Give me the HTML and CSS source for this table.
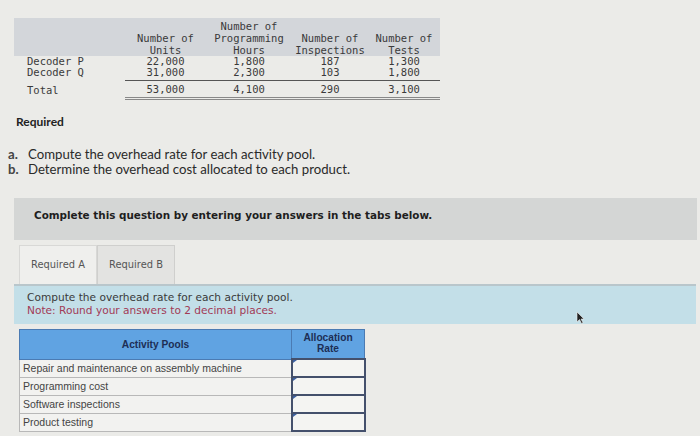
FILE: index.html
```html
<!DOCTYPE html>
<html>
<head>
<meta charset="utf-8">
<link rel="stylesheet" href="styles.css">
</head>
<body>
<div class="page">
  <table class="data">
    <thead>
      <tr>
        <th class="lbl"></th>
        <th class="c1">Number of<br>Units</th>
        <th class="c2">Number of<br>Programming<br>Hours</th>
        <th class="c3">Number of<br>Inspections</th>
        <th class="c4">Number of<br>Tests</th>
      </tr>
    </thead>
    <tbody>
      <tr class="first"><td class="lbl">Decoder P</td><td>22,000</td><td>1,800</td><td>187</td><td>1,300</td></tr>
      <tr class="sub"><td class="lbl">Decoder Q</td><td>31,000</td><td>2,300</td><td>103</td><td>1,800</td></tr>
      <tr class="total"><td class="lbl">Total</td><td>53,000</td><td>4,100</td><td>290</td><td>3,100</td></tr>
    </tbody>
  </table>

  <div class="required">Required</div>
  <ol class="tasks">
    <li><span class="mark">a.</span>Compute the overhead rate for each activity pool.</li>
    <li><span class="mark">b.</span>Determine the overhead cost allocated to each product.</li>
  </ol>

  <div class="complete">Complete this question by entering your answers in the tabs below.</div>

  <div class="tabs">
    <div class="tab active">Required A</div>
    <div class="tab">Required B</div>
  </div>
  <div class="instr">
    <div>Compute the overhead rate for each activity pool.</div>
    <div class="note">Note: Round your answers to 2 decimal places.</div>
    <svg class="cursor" width="9" height="13" viewBox="0 0 9 13"><path d="M1 1 L1 11 L3.5 8.5 L5.5 12.5 L7 11.8 L5 8 L8 8 Z" fill="#222" stroke="#eee" stroke-width="0.6"/></svg>
  </div>

  <table class="answer">
    <thead>
      <tr><th class="pool">Activity Pools</th><th class="rate">Allocation<br>Rate</th></tr>
    </thead>
    <tbody>
      <tr><td class="pool">Repair and maintenance on assembly machine</td><td class="rate"><span class="flag"></span></td></tr>
      <tr><td class="pool">Programming cost</td><td class="rate"><span class="flag"></span></td></tr>
      <tr><td class="pool">Software inspections</td><td class="rate"><span class="flag"></span></td></tr>
      <tr><td class="pool">Product testing</td><td class="rate"><span class="flag"></span></td></tr>
    </tbody>
  </table>
</div>
</body>
</html>
```
FILE: styles.css
```css
html, body {
  margin: 0;
  padding: 0;
  background: #ebebe8;
  width: 700px;
  height: 436px;
  overflow: hidden;
}
.page {
  padding: 18px 0 0 0;
  font-family: "Open Sans", "Liberation Sans", sans-serif;
  color: #2c2c2c;
}
.data {
  margin-left: 14px;
  width: 426px;
  border-collapse: collapse;
  font-family: "DejaVu Sans Mono", monospace;
  font-size: 10.5px;
  color: #3a3a3a;
}
.data thead th {
  background: #d3d6da;
  font-weight: normal;
  text-align: center;
  vertical-align: bottom;
  padding: 2px 0 0 0;
  line-height: 12px;
}
.data th.lbl { width: 111px; }
.data th.c1 { width: 81px; }
.data th.c2 { width: 86px; }
.data th.c3 { width: 76px; }
.data td {
  text-align: center;
  padding: 0;
  line-height: 11px;
}
.data td.lbl {
  text-align: left;
  padding-left: 13px;
}
.data tr.first td { padding-top: 0; }
.data tr.sub td:not(.lbl) { border-bottom: 1px solid #555; }
.data tr.sub td { padding-bottom: 2px; }
.data tr.total td { padding: 3px 0 2px 0; }
.data tr.total td.lbl { padding-left: 13px; }
.data tr.total td:not(.lbl) { border-bottom: 3px double #888; }

.required {
  margin: 14px 0 0 16px;
  font-family: "Lato", sans-serif;
  font-weight: bold;
  font-size: 12px;
  color: #222;
}
.tasks {
  list-style: none;
  margin: 18px 0 0 0;
  padding: 0 0 0 8px;
  font-family: "Lato", sans-serif;
  font-size: 13.2px;
  line-height: 15px;
  color: #2a2a2a;
}
.tasks .mark {
  display: inline-block;
  width: 20px;
  font-weight: bold;
  color: #444;
}
.complete {
  margin: 21px 3px 0 14px;
  height: 42px;
  box-sizing: border-box;
  padding: 11px 0 0 20px;
  background: #d4d6d5;
  font-family: "DejaVu Sans", sans-serif;
  font-weight: bold;
  font-size: 10.4px;
  line-height: 12px;
  color: #1e1e1e;
}
.tabs {
  display: flex;
  margin: 5px 0 0 19px;
  height: 39px;
}
.tab {
  width: 78px;
  box-sizing: border-box;
  border: 1px solid #cfcfcd;
  border-bottom: none;
  background: #e3e3e1;
  font-family: "DejaVu Sans", sans-serif;
  font-size: 9.9px;
  color: #555;
  padding: 13px 0 0 0;
  text-align: center;
}
.tab.active {
  background: #efefed;
  border-color: #d8d8d6;
}
.instr {
  position: relative;
  margin: 0 4px 0 14px;
  height: 40px;
  box-sizing: border-box;
  border-top: 2px solid #b9c6cb;
  background: #c3dfe8;
  padding: 5px 0 0 13px;
  font-family: "DejaVu Sans", sans-serif;
  font-size: 10.6px;
  line-height: 13px;
  color: #3a3a3a;
}
.instr .note { color: #a23a56; }
.cursor {
  position: absolute;
  left: 562px;
  top: 25px;
}
.answer {
  margin: 5px 0 0 19px;
  border-collapse: collapse;
  font-family: "Liberation Sans", sans-serif;
  font-size: 10.5px;
}
.answer th {
  background: #60a3e2;
  color: #1d2e55;
  font-weight: bold;
  height: 26px;
  padding: 0;
  border: 1px solid #4b7bb3;
  line-height: 11px;
  font-size: 10.2px;
}
.answer th.pool { width: 271px; }
.answer th.rate { width: 72px; vertical-align: top; padding-top: 2px; }
.answer td {
  height: 16px;
  padding: 0;
}
.answer td.pool {
  background: #f2f2f0;
  border: 1px solid #b8b8b8;
  padding-left: 3px;
  color: #444;
}
.answer td.rate {
  position: relative;
  background: #f4f4f2;
  border: 2px solid #44506c;
}
.flag {
  position: absolute;
  left: 0;
  top: 0;
  width: 0;
  height: 0;
  border-top: 3px solid #3b5fa0;
  border-right: 4px solid transparent;
}
```
